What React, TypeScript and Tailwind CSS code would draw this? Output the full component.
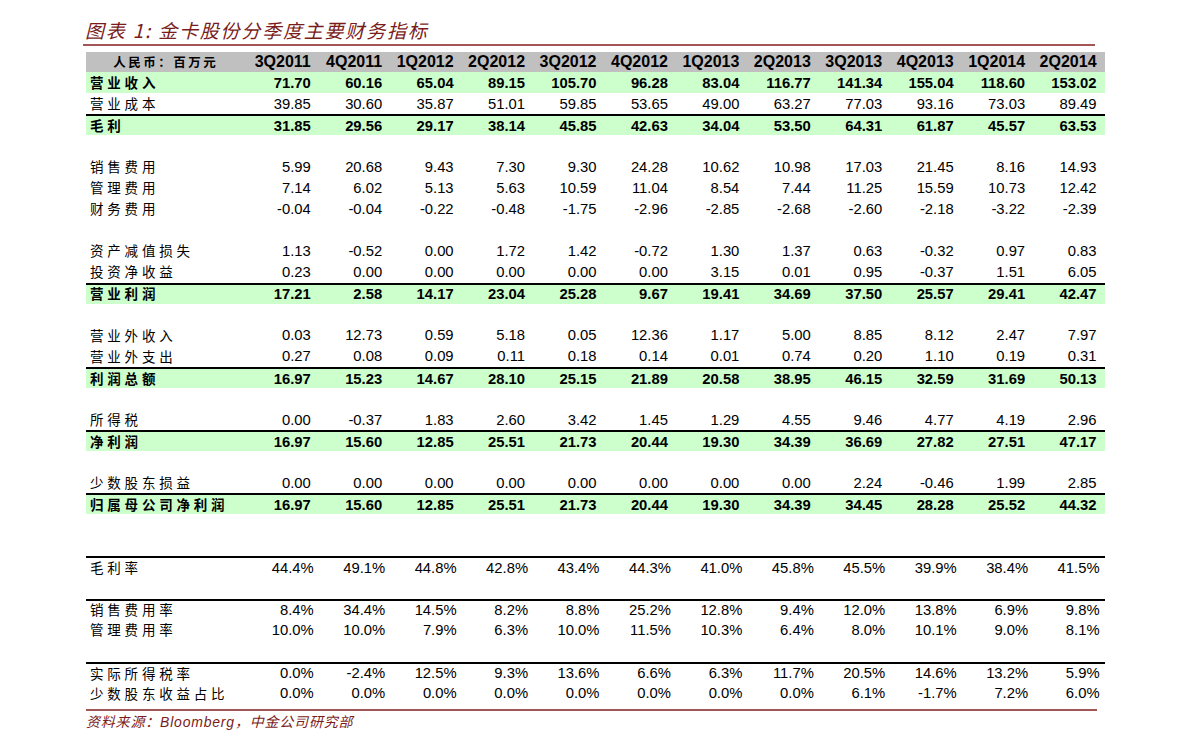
import React from "react";

type Row = {
  label?: string;
  vals?: string[];
  bold?: boolean;
  line?: boolean;
  pct?: boolean;
};

const cols = ["3Q2011","4Q2011","1Q2012","2Q2012","3Q2012","4Q2012","1Q2013","2Q2013","3Q2013","4Q2013","1Q2014","2Q2014"];
const s = (t: string) => t.split(" ");

const rows: Row[] = [
  { label: "营业收入", vals: s("71.70 60.16 65.04 89.15 105.70 96.28 83.04 116.77 141.34 155.04 118.60 153.02"), bold: true },
  { label: "营业成本", vals: s("39.85 30.60 35.87 51.01 59.85 53.65 49.00 63.27 77.03 93.16 73.03 89.49") },
  { label: "毛利", vals: s("31.85 29.56 29.17 38.14 45.85 42.63 34.04 53.50 64.31 61.87 45.57 63.53"), bold: true, line: true },
  {},
  { label: "销售费用", vals: s("5.99 20.68 9.43 7.30 9.30 24.28 10.62 10.98 17.03 21.45 8.16 14.93") },
  { label: "管理费用", vals: s("7.14 6.02 5.13 5.63 10.59 11.04 8.54 7.44 11.25 15.59 10.73 12.42") },
  { label: "财务费用", vals: s("-0.04 -0.04 -0.22 -0.48 -1.75 -2.96 -2.85 -2.68 -2.60 -2.18 -3.22 -2.39") },
  {},
  { label: "资产减值损失", vals: s("1.13 -0.52 0.00 1.72 1.42 -0.72 1.30 1.37 0.63 -0.32 0.97 0.83") },
  { label: "投资净收益", vals: s("0.23 0.00 0.00 0.00 0.00 0.00 3.15 0.01 0.95 -0.37 1.51 6.05") },
  { label: "营业利润", vals: s("17.21 2.58 14.17 23.04 25.28 9.67 19.41 34.69 37.50 25.57 29.41 42.47"), bold: true, line: true },
  {},
  { label: "营业外收入", vals: s("0.03 12.73 0.59 5.18 0.05 12.36 1.17 5.00 8.85 8.12 2.47 7.97") },
  { label: "营业外支出", vals: s("0.27 0.08 0.09 0.11 0.18 0.14 0.01 0.74 0.20 1.10 0.19 0.31") },
  { label: "利润总额", vals: s("16.97 15.23 14.67 28.10 25.15 21.89 20.58 38.95 46.15 32.59 31.69 50.13"), bold: true, line: true },
  {},
  { label: "所得税", vals: s("0.00 -0.37 1.83 2.60 3.42 1.45 1.29 4.55 9.46 4.77 4.19 2.96") },
  { label: "净利润", vals: s("16.97 15.60 12.85 25.51 21.73 20.44 19.30 34.39 36.69 27.82 27.51 47.17"), bold: true, line: true },
  {},
  { label: "少数股东损益", vals: s("0.00 0.00 0.00 0.00 0.00 0.00 0.00 0.00 2.24 -0.46 1.99 2.85") },
  { label: "归属母公司净利润", vals: s("16.97 15.60 12.85 25.51 21.73 20.44 19.30 34.39 34.45 28.28 25.52 44.32"), bold: true, line: true },
  {},
  {},
  { label: "毛利率", vals: s("44.4% 49.1% 44.8% 42.8% 43.4% 44.3% 41.0% 45.8% 45.5% 39.9% 38.4% 41.5%"), line: true, pct: true },
  {},
  { label: "销售费用率", vals: s("8.4% 34.4% 14.5% 8.2% 8.8% 25.2% 12.8% 9.4% 12.0% 13.8% 6.9% 9.8%"), line: true, pct: true },
  { label: "管理费用率", vals: s("10.0% 10.0% 7.9% 6.3% 10.0% 11.5% 10.3% 6.4% 8.0% 10.1% 9.0% 8.1%"), pct: true },
  {},
  { label: "实际所得税率", vals: s("0.0% -2.4% 12.5% 9.3% 13.6% 6.6% 6.3% 11.7% 20.5% 14.6% 13.2% 5.9%"), line: true, pct: true },
  { label: "少数股东收益占比", vals: s("0.0% 0.0% 0.0% 0.0% 0.0% 0.0% 0.0% 0.0% 6.1% -1.7% 7.2% 6.0%"), pct: true },
];

const grid = "grid grid-cols-[153.3px_repeat(12,71.45px)_8px] w-[1019px]";
const cjk = "font-['Noto_Sans_CJK_SC','Noto_Sans_CJK_SC',sans-serif]";
const num = "font-['Liberation_Sans',Arial,sans-serif]";

export default function App() {
  return (
    <div className="w-[1191px] h-[750px] bg-white text-black overflow-hidden">
      <div className="pl-[83px] pt-[17px] w-[1105px]">
        <div className={`h-[27px] flex items-center pl-[2px] text-[19px] italic text-[#7a1c1c] tracking-[1.8px] ${cjk}`}>
          图表 1: 金卡股份分季度主要财务指标
        </div>
        <div className="w-[1012px] h-[2px] bg-[#a25656]" />
        <div className="pl-[3px] pt-[6px]">
          <div className={`${grid} h-[20px] bg-[#c0c0c0] items-center`}>
            <div className={`text-center text-[12.5px] font-bold tracking-[2.5px] pl-[6px] ${cjk}`}>人民币：百万元</div>
            {cols.map((c) => (
              <div key={c} className={`text-right text-[16px] font-bold leading-none ${num}`}>{c}</div>
            ))}
            <div />
          </div>
          {rows.map((r, i) => (
            <div
              key={i}
              className={`${grid} h-[21.07px] items-center ${r.bold ? "bg-[#ccffcc]" : ""} ${r.line ? "border-t-2 border-black" : ""}`}
            >
              <div className={`pl-[4px] text-[13.5px] tracking-[3.8px] leading-none whitespace-nowrap ${r.bold ? "font-bold" : ""} ${cjk}`}>
                {r.label ?? ""}
              </div>
              {cols.map((c, j) => (
                <div key={c} className={`flex justify-end text-[14.8px] leading-none pt-[1px] ${r.bold ? "font-bold" : ""} ${num}`}>
                  <span className={r.pct ? "-mr-[3px]" : ""}>{r.vals ? r.vals[j] : ""}</span>
                </div>
              ))}
              <div />
            </div>
          ))}
          <div className="w-[1011px] h-[2px] mt-[5px] bg-[#a25656]" />
          <div className={`pt-[1px] text-[14px] italic text-[#7a1c1c] tracking-[0.8px] leading-[18px] ${cjk}`}>
            资料来源：<span className={num}>Bloomberg</span>，中金公司研究部
          </div>
        </div>
      </div>
    </div>
  );
}
